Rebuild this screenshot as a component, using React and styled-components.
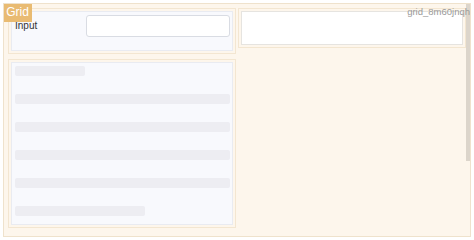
import React from 'react';
import styled, { createGlobalStyle } from 'styled-components';

//******* STYLING *********************************/
const GlobalStyle = createGlobalStyle`
  html, body {
    margin: 0;
    padding: 0;
    background: #ffffff;
    font-family: "Liberation Sans", Arial, sans-serif;
  }
`;

const Page = styled.div`
  width: 474px;
  height: 240px;
  padding: 3px;
  box-sizing: border-box;
  background: #ffffff;
`;

const Frame = styled.div`
  position: relative;
  height: 100%;
  box-sizing: border-box;
  border: 1px solid #efe2cc;
  background: #fdf6ec;
  overflow: hidden;
`;

const Grid = styled.div`
  display: grid;
  grid-template-columns: minmax(0, 1fr) minmax(0, 1fr);
  column-gap: 2px;
  row-gap: 5px;
  align-items: start;
  padding: 4px 4px 0 4px;
`;

const Cell = styled.div`
  border: 1px solid #f3e6d1;
  padding: 2px;
  height: ${(p) => p.h}px;
  box-sizing: border-box;
`;

const Panel = styled.div`
  box-sizing: border-box;
  height: ${(p) => p.h}px;
  background: ${(p) => (p.white ? '#ffffff' : '#f8f9fd')};
  border: 1px solid ${(p) => (p.white ? '#e6e4e0' : '#e9ebf1')};
`;

const FieldRow = styled(Panel)`
  display: flex;
  align-items: flex-start;
  padding: 3px 2px 0 3px;
`;

const Label = styled.span`
  width: 71px;
  flex-shrink: 0;
  padding-top: 5px;
  font-size: 10px;
  color: #333333;
`;

const TextInput = styled.input`
  flex: 1;
  min-width: 0;
  width: 0;
  height: 22px;
  box-sizing: border-box;
  border: 1px solid #d9dce3;
  border-radius: 3px;
  background: #ffffff;
  outline: none;
`;

const SkeletonList = styled(Panel)`
  display: flex;
  flex-direction: column;
  gap: 18px;
  padding: 3px 2px 0 3px;
`;

const Bar = styled.div`
  height: 10px;
  width: ${(p) => p.w || '100%'};
  background: #ededf2;
  border-radius: 2px;
`;

// scroll thumb drawn over the frame edge
const ScrollThumb = styled.div`
  position: absolute;
  top: 0;
  right: 0;
  width: 4px;
  height: 157px;
  background: #dcd5cb;
`;

const Badge = styled.div`
  position: absolute;
  top: -1px;
  left: -1px;
  width: 29px;
  height: 19px;
  background: #e9bb72;
  color: #ffffff;
  font-size: 12px;
  line-height: 19px;
  text-align: center;
`;

const Tag = styled.div`
  position: absolute;
  top: 2px;
  right: 0px;
  font-size: 9.5px;
  color: #9a9a9a;
`;

//********************************************** */

const App = () => {
  return (
    <Page>
      <GlobalStyle />
      <Frame>
        <Grid>
          <Cell h={46}>
            <FieldRow h={40}>
              <Label>Input</Label>
              <TextInput />
            </FieldRow>
          </Cell>
          <Cell h={40}>
            <Panel white h={34} />
          </Cell>
          <Cell h={169}>
            <SkeletonList h={163}>
              <Bar w="70px" />
              <Bar />
              <Bar />
              <Bar />
              <Bar />
              <Bar w="130px" />
            </SkeletonList>
          </Cell>
        </Grid>
        <ScrollThumb />
        <Badge>Grid</Badge>
        <Tag>grid_8m60jnqh</Tag>
      </Frame>
    </Page>
  );
};

export default App;
